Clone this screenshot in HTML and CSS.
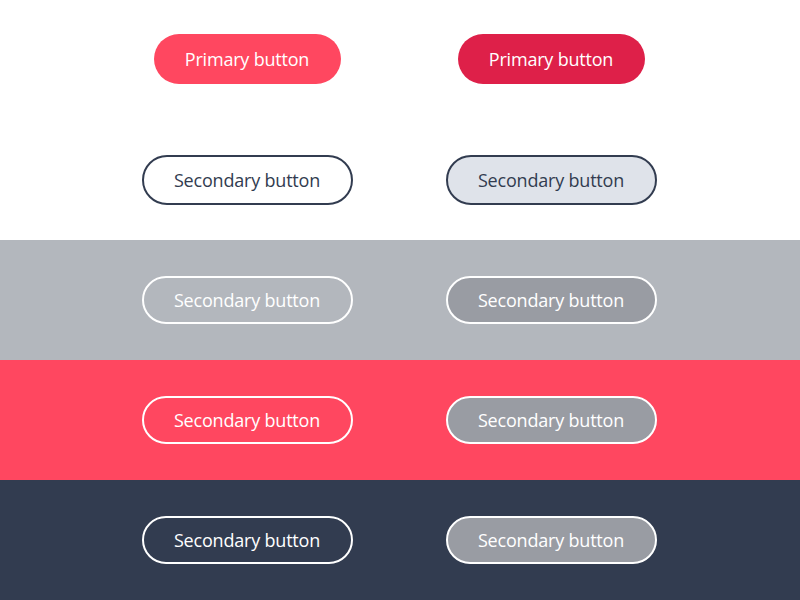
FILE: index.html
```html
<!DOCTYPE html>
<html lang="en">
<head>
    <meta charset="UTF-8">
    <meta name="viewport" content="width=device-width, initial-scale=1.0">
    <title>Buttons</title>
    <link rel="stylesheet" href="styles.css">
</head>
<body>
    <section class="band band-white">
        <div class="row row-first">
            <button class="btn btn-primary">Primary button</button>
            <button class="btn btn-primary is-active">Primary button</button>
        </div>
        <div class="row">
            <button class="btn btn-secondary">Secondary button</button>
            <button class="btn btn-secondary is-active">Secondary button</button>
        </div>
    </section>

    <section class="band band-grey">
        <div class="row">
            <button class="btn btn-secondary btn-light">Secondary button</button>
            <button class="btn btn-secondary btn-light is-active">Secondary button</button>
        </div>
    </section>

    <section class="band band-red">
        <div class="row">
            <button class="btn btn-secondary btn-light">Secondary button</button>
            <button class="btn btn-secondary btn-light is-active">Secondary button</button>
        </div>
    </section>

    <section class="band band-navy">
        <div class="row">
            <button class="btn btn-secondary btn-light">Secondary button</button>
            <button class="btn btn-secondary btn-light is-active">Secondary button</button>
        </div>
    </section>
</body>
</html>
```

FILE: styles.css
```css
body {
    margin: 0;
    font-family: "Open Sans", "Noto Sans", sans-serif;
}
.band-white {
    background-color: #fff;
}
.band-grey {
    background-color: #b3b7bd;
}
.band-red {
    background-color: #ff4760;
}
.band-navy {
    background-color: #323c50;
}
.row {
    display: grid;
    grid-template-columns: 304px 304px;
    justify-content: center;
    align-items: center;
    justify-items: center;
    height: 120px;
    padding-right: 2px;
}
.row-first {
    height: 118px;
}
.row-first + .row {
    padding-top: 2px;
}
.btn {
    box-sizing: border-box;
    height: 50px;
    padding: 0;
    border-radius: 25px;
    font-family: inherit;
    font-size: 18px;
    font-weight: 500;
    letter-spacing: -0.2px;
    cursor: pointer;
}
.btn-primary {
    width: 187px;
    border: none;
    background: #ff4760;
    color: #fff;
}
.btn-primary.is-active {
    background: #de2049;
}
.btn-secondary {
    width: 211px;
    border: 2px solid #323c50;
    background: transparent;
    color: #323c50;
}
.btn-secondary.is-active {
    background: #dfe3ea;
}
.btn-light {
    height: 48px;
    border-color: #fff;
    color: #fff;
}
.btn-light.is-active {
    background: #999ca3;
}
```
